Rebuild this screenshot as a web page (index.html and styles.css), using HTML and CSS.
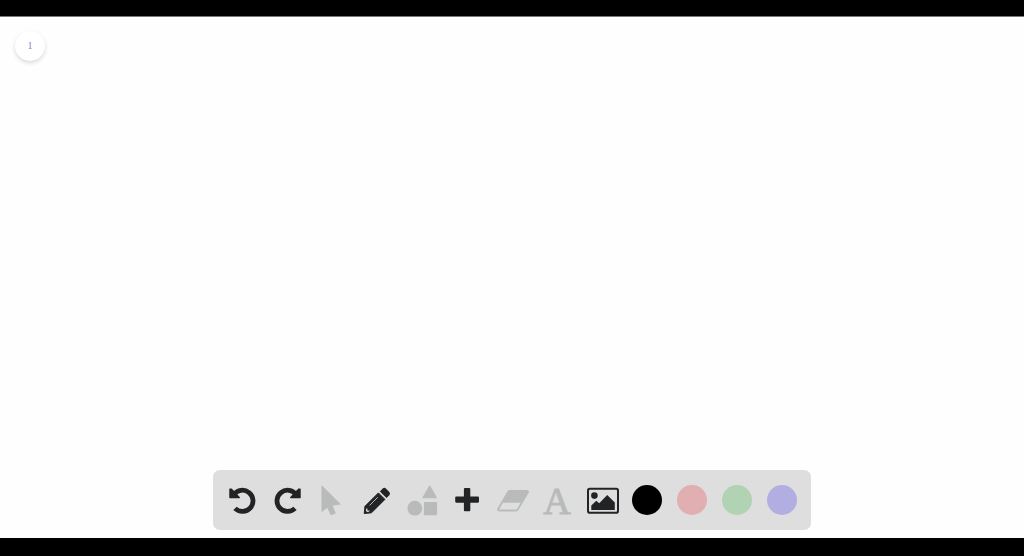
FILE: index.html
```
<!DOCTYPE html>
<html lang="en">
<head>
  <meta charset="UTF-8" />
  <meta name="viewport" content="width=device-width, initial-scale=1.0" />
  <title>Whiteboard</title>
  <link rel="stylesheet" href="styles.css">
</head>
<body>
  <main class="board">
    <button class="page-number" aria-label="Page 1">1</button>

    <div class="toolbar" role="toolbar" aria-label="Drawing tools">
      <button class="tool" aria-label="Undo">
        <svg viewBox="0 0 30 30">
          <path d="M6.8 9.6A10.6 10.6 0 1 1 8 23.4" fill="none" stroke="currentColor" stroke-width="4.8"/>
          <path d="M2.9 4H4.2L6.9 6.7L9.6 9.4L12.4 12.6H2.9Z" fill="currentColor" stroke="currentColor" stroke-width="1.2" stroke-linejoin="round"/>
        </svg>
      </button>
      <button class="tool" aria-label="Redo">
        <svg viewBox="0 0 30 30">
          <path d="M24.2 9.6A10.6 10.6 0 1 0 23 23.4" fill="none" stroke="currentColor" stroke-width="4.8"/>
          <path d="M28.1 4H26.8L24.1 6.7L21.4 9.4L18.6 12.6H28.1Z" fill="currentColor" stroke="currentColor" stroke-width="1.2" stroke-linejoin="round"/>
        </svg>
      </button>
      <button class="tool muted" aria-label="Select">
        <svg viewBox="0 0 30 30">
          <path d="M4.9 .8V26.6L10.5 22.3L14 30L18.3 28.2L15.1 20.2L23.4 19.3Z" fill="currentColor" stroke="currentColor" stroke-width=".8" stroke-linejoin="round"/>
        </svg>
      </button>
      <button class="tool" aria-label="Pen">
        <svg viewBox="0 0 30 30">
          <path d="M2.2 28.5L3 21.3L16.4 7.9L22.9 14.4L9.5 27.8Z" fill="currentColor" stroke="currentColor" stroke-linejoin="round"/>
          <path d="M17.9 6.4L20.7 3.6Q22.3 2 23.9 3.6L27.3 7Q28.9 8.6 27.3 10.2L24.5 13Z" fill="currentColor"/>
          <path d="M7.6 20.4L15.8 12.2" class="cut"/>
          <path d="M4.3 23.4L5.4 23.6V25.4H7.3L7.5 26.5L5 26.9L3.9 25.8Z" class="cut-fill"/>
        </svg>
      </button>
      <button class="tool muted" aria-label="Shapes">
        <svg viewBox="0 0 30 30">
          <g fill="currentColor">
            <circle cx="7.8" cy="23.2" r="7.4"/>
            <rect x="16.9" y="17" width="13.2" height="13.2" rx=".8"/>
            <path d="M22.7 .8L29.5 12.8H15.8Z" stroke="currentColor" stroke-linejoin="round"/>
          </g>
        </svg>
      </button>
      <button class="tool" aria-label="Add">
        <svg viewBox="0 0 30 30">
          <path d="M13 3H17.2Q18.3 3 18.3 4.1V11.5H25.9Q27 11.5 27 12.6V16.6Q27 17.7 25.9 17.7H18.3V25.2Q18.3 26.3 17.2 26.3H13Q11.9 26.3 11.9 25.2V17.7H4.3Q3.2 17.7 3.2 16.6V12.6Q3.2 11.5 4.3 11.5H11.9V4.1Q11.9 3 13 3Z" fill="currentColor"/>
        </svg>
      </button>
      <button class="tool muted" aria-label="Eraser">
        <svg viewBox="0 0 30 30">
          <path d="M12.8 5.9H29.8Q31.4 6.1 30.7 7.6L20.8 24.4Q20.1 25.5 18.8 25.5H2.2Q.6 25.3 1.3 23.7L11 7.1Q11.7 5.9 12.8 5.9Z" class="eraser-edge"/>
          <path d="M12.8 5.2H30Q32.3 5.6 31.5 7.8L25.2 17.7H4.8L10.4 7Q11.3 5.2 12.8 5.2Z" fill="currentColor"/>
        </svg>
      </button>
      <button class="tool muted letter" aria-label="Text">A</button>
      <button class="tool" aria-label="Image">
        <svg viewBox="0 0 30 30">
          <rect x="1" y="3.7" width="30" height="24" rx="1.8" fill="none" stroke="currentColor" stroke-width="2"/>
          <circle cx="7.4" cy="10.6" r="3.3" fill="currentColor"/>
          <path d="M4.3 25V20.5L9.3 15.7L12.2 18.2L20.2 10L27.8 17.6V25Z" fill="currentColor"/>
        </svg>
      </button>
      <button class="tool color black" aria-label="Black"></button>
      <button class="tool color red" aria-label="Red"></button>
      <button class="tool color green" aria-label="Green"></button>
      <button class="tool color purple" aria-label="Purple"></button>
    </div>
  </main>
</body>
</html>
```
FILE: styles.css
```
* { margin: 0; padding: 0; box-sizing: border-box; }
body {
  min-height: 100vh;
  display: flex;
  flex-direction: column;
  padding: 16px 0 18px;
  background: #000;
  font-family: 'Liberation Serif', serif;
}
.board {
  flex: 1;
  display: flex;
  flex-direction: column;
  align-items: center;
  justify-content: space-between;
  padding: 14px 15px 8px;
  border-top: 1px solid #777;
  background: #fefefe;
}
button {
  border: none;
  background: none;
  cursor: pointer;
}
.page-number {
  align-self: flex-start;
  width: 30px;
  height: 30px;
  border-radius: 50%;
  background: #fff;
  color: #8580bd;
  font-family: inherit;
  font-size: 10px;
  line-height: 30px;
  box-shadow: 0 2px 4px rgba(0,0,0,0.15);
}
.toolbar {
  display: flex;
  gap: 15px;
  padding: 15px 14px;
  border-radius: 7px;
  background: #dedede;
}
.tool {
  width: 30px;
  height: 30px;
  color: #212325;
}
.tool svg {
  display: block;
  width: 30px;
  height: 30px;
  overflow: visible;
}
.muted { color: #b9baba; }
.cut {
  fill: none;
  stroke: #dedede;
  stroke-width: .8;
}
.cut-fill { fill: #dedede; }
.eraser-edge {
  fill: #dedede;
  stroke: currentColor;
  stroke-width: 1.8;
}
.letter {
  font-family: 'Liberation Serif', serif;
  font-size: 38px;
  line-height: 32px;
  -webkit-text-stroke: 1px #b9baba;
}
.color { border-radius: 50%; }
.black { background: #000; }
.red { background: #e1aeb2; }
.green { background: #b2d2b4; }
.purple { background: #b2aee1; }
```
